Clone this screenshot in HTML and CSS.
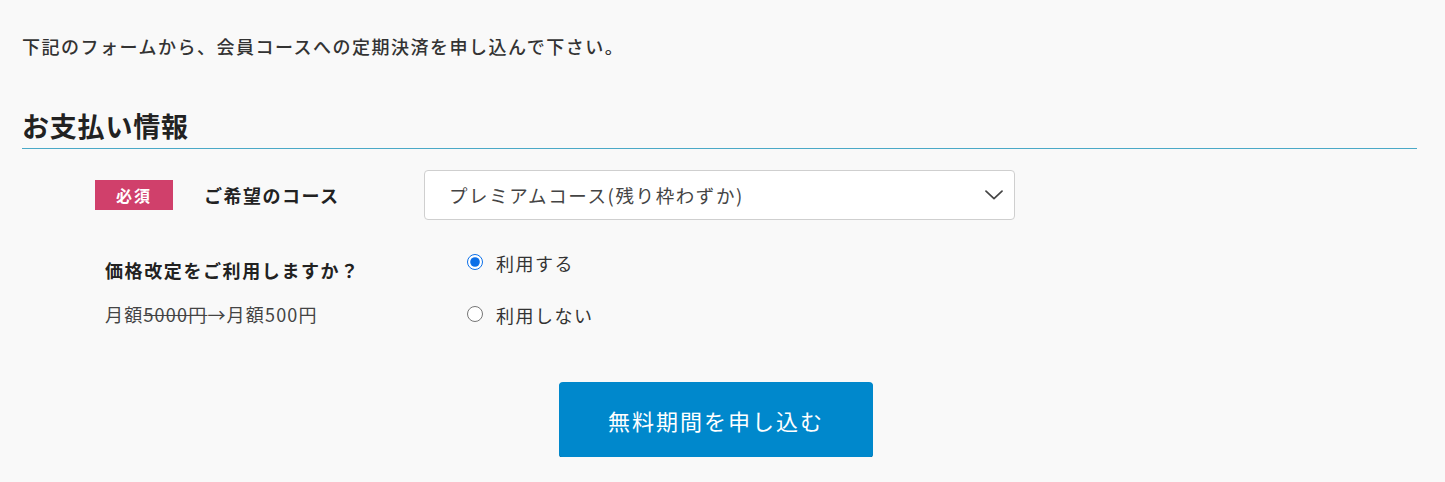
FILE: index.html
```html
<!DOCTYPE html>
<html lang="ja">
<head>
<meta charset="utf-8">
<title>お支払い情報</title>
<link rel="stylesheet" href="styles.css">
</head>
<body>
<main class="page">
  <p class="intro">下記のフォームから、会員コースへの定期決済を申し込んで下さい。</p>
  <h2 class="section-title">お支払い情報</h2>
  <form class="form">
    <div class="row row-course">
      <div class="label-col">
        <span class="badge">必須</span>
        <span class="label">ご希望のコース</span>
      </div>
      <div class="select">
        <span class="select-text">プレミアムコース(残り枠わずか)</span>
        <svg class="chevron" width="18" height="10" viewBox="0 0 18 10"><path d="M1 1.2 L9 8.6 L17 1.2" fill="none" stroke="#444" stroke-width="1.7" stroke-linecap="round" stroke-linejoin="round"/></svg>
      </div>
    </div>
    <div class="row row-price">
      <div class="price-col">
        <p class="question">価格改定をご利用しますか？</p>
        <p class="note">月額<s>5000円</s>→月額500円</p>
      </div>
      <div class="radios">
        <label class="radio"><input type="radio" name="use" checked><span>利用する</span></label>
        <label class="radio"><input type="radio" name="use"><span>利用しない</span></label>
      </div>
    </div>
    <div class="actions">
      <button type="button" class="submit">無料期間を申し込む</button>
    </div>
  </form>
</main>
</body>
</html>
```
FILE: styles.css
```css
html, body {
  margin: 0;
  padding: 0;
  background: #f9f9f9;
}
body {
  font-family: "Noto Sans CJK JP", "Noto Sans", sans-serif;
  color: #333;
}
.page {
  padding: 33px 28px 0 22px;
}
.intro {
  margin: 0;
  font-size: 18px;
  line-height: 27px;
  font-weight: 500;
  letter-spacing: 1.5px;
  color: #333;
}
.section-title {
  margin: 46px 0 0;
  font-size: 27px;
  line-height: 40px;
  font-weight: 700;
  color: #222;
  letter-spacing: 0.8px;
  padding-bottom: 2px;
  border-bottom: 1px solid #4ba9c7;
}
.form {
  padding-left: 73px;
}
.row {
  display: flex;
}
.row-course {
  margin-top: 21px;
  align-items: center;
  height: 50px;
}
.label-col {
  width: 329px;
  display: flex;
  align-items: center;
}
.badge {
  width: 78px;
  height: 30px;
  background: #d0406b;
  color: #fff;
  font-size: 16px;
  font-weight: 700;
  letter-spacing: 2px;
  display: flex;
  align-items: center;
  justify-content: center;
}
.label {
  margin-left: 31px;
  font-size: 18px;
  font-weight: 700;
  letter-spacing: 1.5px;
  color: #222;
}
.select {
  box-sizing: border-box;
  width: 591px;
  height: 50px;
  background: #fff;
  border: 1px solid #cfcfcf;
  border-radius: 4px;
  display: flex;
  align-items: center;
  justify-content: space-between;
  padding: 0 11px 0 24px;
}
.select-text {
  font-size: 18.5px;
  letter-spacing: 1.6px;
  color: #444;
}
.row-price {
  margin-top: 37px;
}
.price-col {
  width: 362px;
  padding-left: 10px;
}
.question {
  margin: 0;
  font-size: 18px;
  line-height: 27px;
  font-weight: 700;
  letter-spacing: 1.6px;
  color: #222;
}
.note {
  margin: 17px 0 0;
  font-size: 18px;
  line-height: 27px;
  letter-spacing: 1.2px;
  color: #444;
}
.note s {
  text-decoration-thickness: 1px;
}
.radios {
  display: flex;
  flex-direction: column;
  gap: 25px;
  margin-top: -7px;
}
.radio {
  display: flex;
  align-items: center;
  font-size: 18px;
  line-height: 27px;
  letter-spacing: 1.5px;
  color: #333;
}
.radio input {
  width: 16px;
  height: 16px;
  margin: 0 13px 0 0;
  accent-color: #0b6fe8;
  position: relative;
  top: -2px;
}
.actions {
  display: flex;
  justify-content: center;
  margin-top: 53px;
  margin-left: -73px;
  padding-right: 7px;
}
.submit {
  width: 314px;
  height: 75px;
  border: 0;
  border-radius: 4px;
  background: #0088cc;
  color: #fff;
  font-family: "Noto Sans CJK JP", "Noto Sans", sans-serif;
  font-size: 22px;
  font-weight: 400;
  letter-spacing: 2px;
  box-shadow: 0 1px 0 #0072ab;
}
```
